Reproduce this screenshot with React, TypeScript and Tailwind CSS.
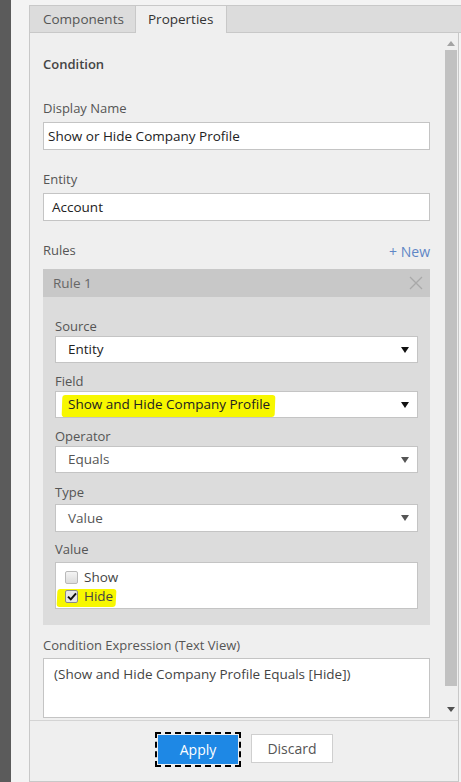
import React from "react";

const font = { fontFamily: '"Open Sans", "Noto Sans", sans-serif' };

function Caret({ dark = true }: { dark?: boolean }) {
  return (
    <svg width="8" height="6" viewBox="0 0 8 6" className="absolute right-[8px] top-1/2 -translate-y-1/2">
      <path d="M0 0 L8 0 L4 6 Z" fill={dark ? "#111" : "#555"} />
    </svg>
  );
}

function Select({ value, dark = true, highlight = false, className = "" }: { value: string; dark?: boolean; highlight?: boolean; className?: string }) {
  return (
    <div className={`relative h-[27px] bg-white border border-[#c4c4c4] flex items-center pl-[12px] ${className}`}>
      {highlight && <span className="absolute left-[6px] top-[3px] h-[22px] w-[213px] rounded-[3px] bg-[#f7f700] -skew-x-2" />}
      <span className={`relative text-[13.5px] ${dark ? "text-[#222]" : "text-[#555]"}`}>{value}</span>
      <Caret dark={dark} />
    </div>
  );
}

function Label({ children, className = "" }: { children: React.ReactNode; className?: string }) {
  return <div className={`text-[13px] leading-[20px] text-[#555] ${className}`}>{children}</div>;
}

function Checkbox({ checked }: { checked?: boolean }) {
  return (
    <span
      className={`relative inline-flex h-[13px] w-[13px] items-center justify-center rounded-[2px] border ${
        checked ? "border-[#8a8a8a] bg-[#e6e6e6]" : "border-[#b9b9b9] bg-gradient-to-b from-[#f4f4f4] to-[#dcdcdc]"
      }`}
    >
      {checked && (
        <svg width="10" height="9" viewBox="0 0 10 9">
          <path d="M1 4.6 L3.8 7.4 L9 1.4" fill="none" stroke="#111" strokeWidth="2" />
        </svg>
      )}
    </span>
  );
}

export default function App() {
  return (
    <div className="flex h-[782px] w-[461px] overflow-hidden bg-[#f3f3f3]" style={font}>
      <div className="w-[11px] bg-[#5b5b5b]" />
      <div className="w-[18px]" />

      <div className="flex w-[432px] flex-col pt-[5px]">
        {/* tabs */}
        <div className="flex h-[28px] border-y border-l border-[#c8c8c8] bg-[#dcdcdc]">
          <div className="flex w-[105px] items-center pl-[13px] text-[13.5px] text-[#555]">Components</div>
          <div className="-mb-px flex w-[92px] items-center border-x border-[#c8c8c8] bg-[#efefef] pl-[12px] text-[13.5px] text-[#333]">
            Properties
          </div>
        </div>

        <div className="flex flex-1 flex-col border-x border-b border-[#c8c8c8] bg-[#efefef] mr-[2px]">
          <div className="flex h-[687px] overflow-hidden">
            {/* scroll content */}
            <div className="w-[413px] px-[13px] pt-[21px]">
              <div className="text-[13px] font-semibold leading-[20px] text-[#444]">Condition</div>

              <Label className="mt-[24px]">Display Name</Label>
              <div className="mt-[4px] flex h-[28px] items-center border border-[#c4c4c4] bg-white pl-[4px] text-[13.5px] text-[#222]">
                Show or Hide Company Profile
              </div>

              <Label className="mt-[19px]">Entity</Label>
              <div className="mt-[4px] flex h-[28px] items-center border border-[#c4c4c4] bg-white pl-[8px] text-[13.5px] text-[#222]">
                Account
              </div>

              <div className="mt-[19px] flex h-[20px] items-center justify-between">
                <Label>Rules</Label>
                <span className="pt-[3px] text-[14px] leading-[20px] text-[#5f86c6]">+ New</span>
              </div>

              {/* rule card */}
              <div className="mt-[9px]">
                <div className="flex h-[28px] items-center justify-between bg-[#c8c8c8] pl-[10px] pr-[7px]">
                  <span className="text-[13.5px] text-[#666]">Rule 1</span>
                  <svg width="14" height="14" viewBox="0 0 14 14">
                    <path d="M1 1 L13 13 M13 1 L1 13" stroke="#a9a9a9" strokeWidth="1.3" />
                  </svg>
                </div>
                <div className="bg-[#dcdcdc] px-[12px] pt-[19px] pb-[16px]">
                  <Label>Source</Label>
                  <Select value="Entity" />

                  <Label className="mt-[8px]">Field</Label>
                  <Select value="Show and Hide Company Profile" highlight />

                  <Label className="mt-[8px]">Operator</Label>
                  <Select value="Equals" dark={false} />

                  <Label className="mt-[9px]">Type</Label>
                  <Select value="Value" dark={false} className="mt-[2px] h-[28px]" />

                  <Label className="mt-[7px]">Value</Label>
                  <div className="relative mt-[3px] h-[47px] border border-[#c4c4c4] bg-white pl-[9px] pt-[5px]">
                    <span className="absolute left-[1px] top-[26px] h-[18px] w-[59px] rounded-[3px] bg-[#f7f700] -skew-x-3" />
                    <div className="relative flex h-[19px] items-center gap-[6px] text-[13.5px] text-[#444]">
                      <Checkbox /> Show
                    </div>
                    <div className="relative flex h-[19px] items-center gap-[6px] text-[13.5px] text-[#444]">
                      <Checkbox checked /> Hide
                    </div>
                  </div>
                </div>
              </div>

              <Label className="mt-[10px]">Condition Expression (Text View)</Label>
              <div className="mt-[3px] h-[60px] border border-[#c4c4c4] bg-white pl-[10px] pt-[6px] text-[13.5px] leading-[18px] text-[#444]">
                (Show and Hide Company Profile Equals [Hide])
              </div>
            </div>

            {/* scrollbar */}
            <div className="flex w-[15px] flex-col items-center pt-[8px] pb-[8px]">
              <svg width="8" height="5" viewBox="0 0 8 5">
                <path d="M0 5 L8 5 L4 0 Z" fill="#a3a3a3" />
              </svg>
              <div className="mt-[4px] h-[636px] w-[12px] bg-[#c1c1c1]" />
              <div className="flex-1" />
              <svg width="8" height="5" viewBox="0 0 8 5">
                <path d="M0 0 L8 0 L4 5 Z" fill="#505050" />
              </svg>
            </div>
          </div>

          {/* footer */}
          <div className="flex flex-1 items-start justify-center gap-[10px] border-t border-[#d4d4d4] pt-[11px]">
            <div className="border-2 border-dashed border-black p-px">
              <button className="h-[29px] w-[80px] bg-[#1e88e5] text-[14px] text-white">Apply</button>
            </div>
            <button className="mt-[2px] h-[29px] w-[82px] border border-[#cfcfcf] bg-white text-[14px] text-[#555]">Discard</button>
          </div>
        </div>
      </div>
    </div>
  );
}
